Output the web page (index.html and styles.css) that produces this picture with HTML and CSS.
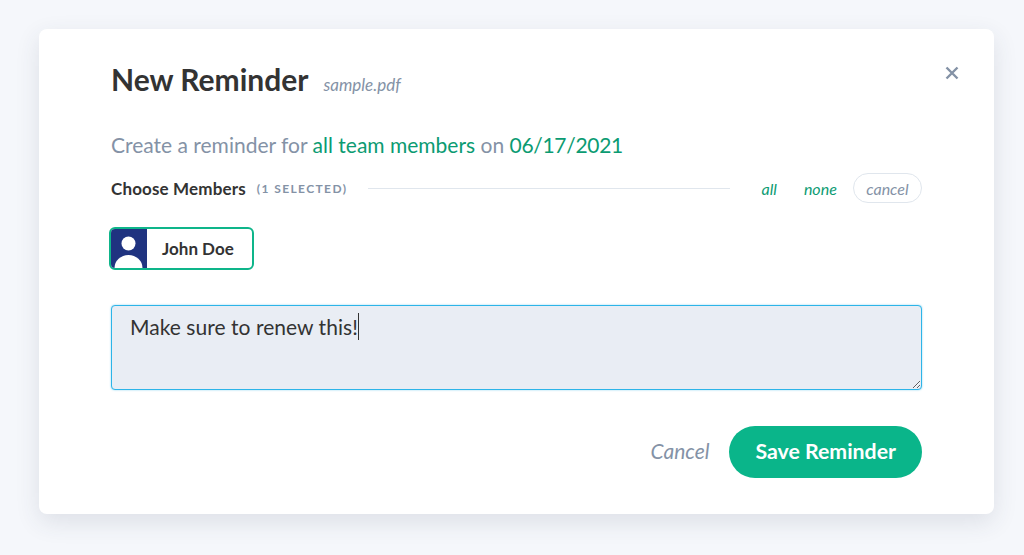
FILE: index.html
```html
<!doctype html>
<html lang="en">
  <head>
    <meta charset="UTF-8" />
    <meta name="viewport" content="width=device-width, initial-scale=1.0" />
    <title>New Reminder</title>
    <link rel="stylesheet" href="styles.css">
  </head>
  <body>
    <div class="modal">
      <button class="close" type="button" aria-label="Close">
        <svg width="14" height="14" viewBox="0 0 14 14">
          <path d="M1.5 1.5L12.5 12.5M12.5 1.5L1.5 12.5" />
        </svg>
      </button>

      <div class="modal-header">
        <h1>New Reminder</h1>
        <span class="file-name">sample.pdf</span>
      </div>

      <p class="summary">
        Create a reminder for <a href="#">all team members</a> on <a class="summary-date" href="#">06/17/2021</a>
      </p>

      <div class="members-bar">
        <span class="members-title">Choose Members</span>
        <span class="members-count">(1 selected)</span>
        <span class="members-rule"></span>
        <a class="members-link" href="#">all</a>
        <a class="members-link" href="#">none</a>
        <button class="pill" type="button">cancel</button>
      </div>

      <div class="member-list">
        <div class="member selected">
          <span class="member-avatar">
            <svg width="36" height="38" viewBox="0 0 36 38">
              <circle cx="17.500" cy="13.500" r="7" />
              <ellipse cx="17.500" cy="38" rx="14" ry="13" />
            </svg>
          </span>
          <span class="member-name">John Doe</span>
        </div>
      </div>

      <div class="note-wrap">
        <textarea class="note">Make sure to renew this!</textarea>
        <span class="note-caret"></span>
      </div>

      <div class="modal-actions">
        <a class="cancel" href="#">Cancel</a>
        <button class="save" type="submit">Save Reminder</button>
      </div>
    </div>
  </body>
</html>
```

FILE: styles.css
```css
* {
  margin: 0;
  padding: 0;
  box-sizing: border-box;
  font-family: Lato, sans-serif;
}

body {
  height: 555px;
  overflow: hidden;
  background: #f5f7fb;
  padding: 29px 30px 41px 39px;
}

a {
  text-decoration: none;
}

.modal {
  position: relative;
  height: 485px;
  background: white;
  border-radius: 8px;
  box-shadow: 0 8px 24px rgba(50, 60, 80, 0.12);
  padding: 31px 72px 0;
}

.close {
  position: absolute;
  top: 37px;
  right: 35px;
  display: flex;
  background: none;
  border: none;
  cursor: pointer;
}

.close path {
  fill: none;
  stroke: #8492a6;
  stroke-width: 2.4;
}

.modal-header {
  display: flex;
  align-items: baseline;
  gap: 15px;
}

.modal-header h1 {
  font-size: 30px;
  line-height: 38px;
  font-weight: 700;
  color: #333;
}

.file-name {
  font-size: 17px;
  font-style: italic;
  color: #8492a6;
}

.summary {
  margin-top: 33px;
  font-size: 21px;
  line-height: 28px;
  color: #8492a6;
}

.summary a {
  color: #0b9b72;
}

.summary-date {
  letter-spacing: -0.3px;
}

.members-bar {
  display: flex;
  align-items: center;
  margin-top: 14px;
  height: 30px;
}

.members-title {
  font-size: 17px;
  font-weight: 700;
  letter-spacing: 0.15px;
  color: #333;
}

.members-count {
  margin-left: 11px;
  font-size: 12px;
  font-weight: 700;
  letter-spacing: 1.4px;
  text-transform: uppercase;
  color: #8492a6;
}

.members-rule {
  flex: 1;
  height: 1px;
  margin: 0 31px 0 21px;
  background: #e0e6ed;
}

.members-link {
  margin-right: 27px;
  font-size: 16px;
  font-style: italic;
  color: #0b9b72;
}

.members-link + .members-link {
  margin-right: 16px;
}

.pill {
  height: 30px;
  padding: 0 12.500px;
  background: white;
  border: 1px solid #e0e6ed;
  border-radius: 15px;
  font-size: 16px;
  font-style: italic;
  color: #8492a6;
}

.member-list {
  display: flex;
  margin-top: 24px;
  margin-left: -2px;
}

.member {
  display: flex;
  align-items: center;
  height: 43px;
  border: 2px solid #0eb58a;
  border-radius: 6px;
  overflow: hidden;
  background: white;
}

.member-avatar {
  display: flex;
  align-items: flex-end;
  width: 36px;
  height: 39px;
  background: #1f3380;
}

.member-avatar svg {
  fill: white;
}

.member-name {
  padding: 0 18px 0 15px;
  font-size: 17px;
  font-weight: 700;
  color: #333;
}

.note-wrap {
  position: relative;
  margin-top: 35px;
}

.note {
  display: block;
  width: 100%;
  height: 85px;
  padding: 7px 18px;
  background: #e9edf4;
  border: 1px solid #2db4e8;
  border-radius: 4px;
  box-shadow: 0 0 2px rgba(45, 180, 232, 0.6);
  outline: none;
  font-size: 21px;
  line-height: 28px;
  letter-spacing: 0.04px;
  color: #333;
}

.note-caret {
  position: absolute;
  top: 8px;
  left: 247px;
  width: 1px;
  height: 27px;
  background: #333;
}

.modal-actions {
  display: flex;
  align-items: center;
  justify-content: flex-end;
  gap: 20px;
  margin-top: 36px;
}

.cancel {
  padding-bottom: 4px;
  font-size: 21px;
  font-style: italic;
  color: #8492a6;
}

.save {
  height: 52px;
  padding: 0 26px 3px;
  background: #0ab58a;
  border: none;
  border-radius: 26px;
  font-size: 21.300px;
  font-weight: 700;
  color: white;
}
```
